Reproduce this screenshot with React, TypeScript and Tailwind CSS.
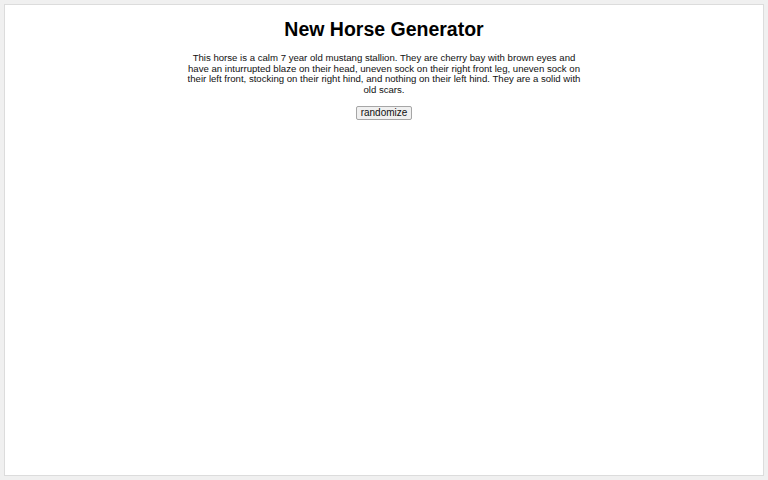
import React, { useState } from 'react';

const sentence =
    'This horse is a calm 7 year old mustang stallion. They are cherry bay with brown eyes and have an inturrupted blaze on their head, uneven sock on their right front leg, uneven sock on their left front, stocking on their right hind, and nothing on their left hind. They are a solid with old scars.';

export default function App() {
    const [text, setText] = useState(sentence);

    return (
        <div className="h-[480px] w-full bg-[#f0f0f0] p-[4px] font-['Liberation_Sans',Arial,sans-serif] text-black">
            <div className="h-[472px] border border-[#dcdcdc] bg-white flex flex-col items-center pt-[11px]">
                <h1 className="text-[19.5px] font-bold leading-[26px]">New Horse Generator</h1>
                <p className="mt-[11px] w-[396px] text-center text-[9.6px] leading-[10.7px] text-[#111]">{text}</p>
                <button
                    className="mt-[10px] h-[14px] px-[4px] text-[10px] leading-none border border-[#a6a6a6] rounded-[2px] bg-[#f0f0f0] text-[#111]"
                    onClick={() => setText(sentence)}
                >
                    randomize
                </button>
            </div>
        </div>
    );
}
